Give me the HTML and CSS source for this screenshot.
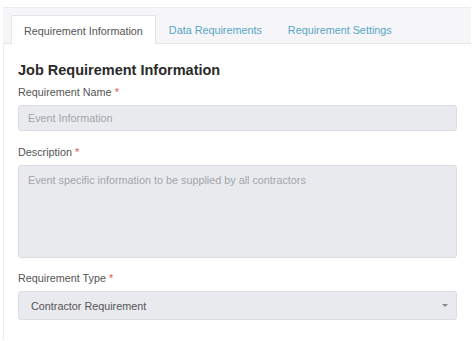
FILE: index.html
```html
<!DOCTYPE html>
<html lang="en">
<head>
    <meta charset="UTF-8">
    <title>Job Requirement</title>
    <link rel="stylesheet" href="styles.css">
</head>
<body>

<!-- Tabs -->
<div class="tabs">
    <div class="tab active">Requirement Information</div>
    <div class="tab">Data Requirements</div>
    <div class="tab">Requirement Settings</div>
</div>

<div class="panel">
    <h2>Job Requirement Information</h2>

    <label class="field-label">Requirement Name <span class="req">*</span></label>
    <input type="text" class="field input" placeholder="Event Information" disabled>

    <label class="field-label">Description <span class="req">*</span></label>
    <textarea class="field textarea" placeholder="Event specific information to be supplied by all contractors" disabled></textarea>

    <label class="field-label">Requirement Type <span class="req">*</span></label>
    <div class="field select">
        <span>Contractor Requirement</span>
        <span class="caret"></span>
    </div>
</div>

</body>
</html>
```

FILE: styles.css
```css
body {
    font-family: "Liberation Sans", Arial, sans-serif;
    background: #fff;
    margin: 0;
    padding: 7px 3px 0 3px;
}

/* Tab bar */
.tabs {
    display: flex;
    align-items: flex-end;
    height: 37px;
    background-color: #f6f5f8;
    border-top: 1px solid #ecebef;
    border-bottom: 1px solid #e6e5e9;
    padding-left: 8px;
    box-sizing: border-box;
}

.tab {
    padding: 0 13px;
    height: 28px;
    line-height: 30px;
    font-size: 10.8px;
    color: #55a6c6;
}

.tab.active {
    background-color: #fff;
    color: #555;
    border: 1px solid #e4e4e7;
    border-bottom: none;
    margin-bottom: -1px;
    padding: 0 12px;
}

/* Form panel */
.panel {
    border-left: 1px solid #ececef;
    margin-right: 7px;
    padding: 16px 0 20px 14px;
}

h2 {
    margin: 0 0 4px 0;
    font-size: 14.5px;
    font-weight: bold;
    line-height: 20px;
    color: #2a2a2a;
}

.field-label {
    display: block;
    font-size: 10.8px;
    line-height: 16px;
    color: #555;
    margin-bottom: 5px;
}

.req {
    color: #e0534b;
}

.field {
    display: block;
    box-sizing: border-box;
    width: 439px;
    background-color: #e9eaee;
    border: 1px solid #dcdde2;
    border-radius: 3px;
    font-family: inherit;
    font-size: 10.8px;
    margin: 0 0 13px 0;
}

.field::placeholder {
    color: #a2a5ac;
}

.input {
    height: 26px;
    padding: 0 9px;
}

.textarea {
    height: 93px;
    padding: 8px 9px;
    resize: none;
    margin-bottom: 12px;
}

.select {
    height: 29px;
    padding: 0 12px;
    display: flex;
    align-items: center;
    justify-content: space-between;
    color: #555;
    margin-bottom: 0;
}

.caret {
    width: 0;
    height: 0;
    border-left: 3px solid transparent;
    border-right: 3px solid transparent;
    border-top: 3px solid #888;
    margin-right: -4px;
}
```
